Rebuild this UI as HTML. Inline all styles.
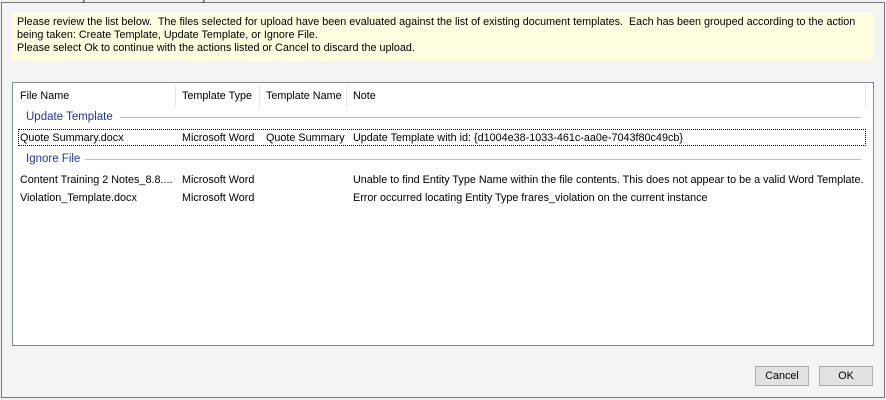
<!DOCTYPE html><html><head><style>
body{margin:0;width:886px;height:400px;background:#f0f0f0;font-family:"Liberation Sans",sans-serif;font-size:10.8px;color:#000;position:relative;overflow:hidden}
.a{position:absolute;white-space:nowrap}
</style></head><body>
<div class="a" style="top:2px;left:1px;background:#f4f4f4;border:1px solid #777;box-sizing:border-box;width:884px;height:396px"></div>
<div class="a" style="left:60px;top:-9px;color:#333">Entity 2019 2 01 48 &nbsp; &nbsp; &nbsp; &nbsp; Entity 2019 2 01 48 &nbsp; &nbsp; Sub</div>
<div class="a" style="left:12px;top:13px;width:861px;height:48px;background:#ffffe1"></div>
<div class="a" style="left:17px;top:16px;line-height:13px">Please review the list below.&nbsp; The files selected for upload have been evaluated against the list of existing document templates.&nbsp; Each has been grouped according to the action<br>being taken: Create Template, Update Template, or Ignore File.<br>Please select Ok to continue with the actions listed or Cancel to discard the upload.</div>
<div class="a" style="left:12px;top:82px;width:862px;height:264px;background:#fff;border:1px solid #828790;box-sizing:border-box"></div>
<div class="a" style="left:865px;top:85px;width:1px;height:22px;background:#e5e5e5"></div>
<div class="a" style="left:175px;top:85px;width:1px;height:22px;background:#e5e5e5"></div>
<div class="a" style="left:259px;top:85px;width:1px;height:22px;background:#e5e5e5"></div>
<div class="a" style="left:346px;top:85px;width:1px;height:22px;background:#e5e5e5"></div>
<div class="a" style="left:20px;top:90px">File Name</div>
<div class="a" style="left:182px;top:90px">Template Type</div>
<div class="a" style="left:266px;top:90px">Template Name</div>
<div class="a" style="left:353px;top:90px">Note</div>
<div class="a" style="left:26px;top:111px;color:#1e3a9a;font-size:11.5px">Update Template</div>
<div class="a" style="left:120px;top:117px;width:741px;height:1px;background:#b4bcd8"></div>
<div class="a" style="left:18px;top:129px;width:848px;height:17px;border:1px dotted #000;box-sizing:border-box"></div>
<div class="a" style="left:20px;top:132px">Quote Summary.docx</div>
<div class="a" style="left:182px;top:132px">Microsoft Word</div>
<div class="a" style="left:266px;top:132px">Quote Summary</div>
<div class="a" style="left:353px;top:132px">Update Template with id: {d1004e38-1033-461c-aa0e-7043f80c49cb}</div>
<div class="a" style="left:26px;top:153px;color:#1e3a9a;font-size:11.5px">Ignore File</div>
<div class="a" style="left:85px;top:159px;width:776px;height:1px;background:#b4bcd8"></div>
<div class="a" style="left:20px;top:174px">Content Training 2 Notes_8.8....</div>
<div class="a" style="left:182px;top:174px">Microsoft Word</div>
<div class="a" style="left:353px;top:174px">Unable to find Entity Type Name within the file contents. This does not appear to be a valid Word Template.</div>
<div class="a" style="left:20px;top:192px">Violation_Template.docx</div>
<div class="a" style="left:182px;top:192px">Microsoft Word</div>
<div class="a" style="left:353px;top:192px">Error occurred locating Entity Type frares_violation on the current instance</div>
<div class="a" style="left:755px;top:366px;width:54px;height:20px;background:#e1e1e1;border:1px solid #adadad;box-sizing:border-box;text-align:center;line-height:18px">Cancel</div>
<div class="a" style="left:819px;top:366px;width:54px;height:20px;background:#e1e1e1;border:1px solid #adadad;box-sizing:border-box;text-align:center;line-height:18px">OK</div>
</body></html>
